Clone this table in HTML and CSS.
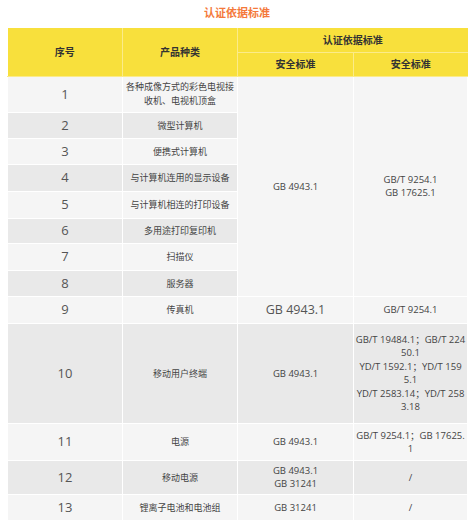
FILE: index.html
```html
<!DOCTYPE html>
<html lang="zh">
<head>
<meta charset="utf-8">
<link rel="stylesheet" href="styles.css">
</head>
<body>
<div class="page">
  <h1 class="title">认证依据标准</h1>
  <table class="std">
    <colgroup>
      <col class="c1"><col class="c2"><col class="c3"><col class="c4">
    </colgroup>
    <thead>
      <tr class="h1">
        <th rowspan="2">序号</th>
        <th rowspan="2">产品种类</th>
        <th colspan="2">认证依据标准</th>
      </tr>
      <tr class="h2">
        <th>安全标准</th>
        <th>安全标准</th>
      </tr>
    </thead>
    <tbody>
      <tr class="r1 lt"><td class="num">1</td><td class="name">各种成像方式的彩色电视接<br>收机、电视机顶盒</td><td class="std-t lt" rowspan="8">GB 4943.1</td><td class="std-t lt" rowspan="8">GB/T 9254.1<br>GB 17625.1</td></tr>
      <tr class="r2 dk"><td class="num">2</td><td class="name">微型计算机</td></tr>
      <tr class="r3 lt"><td class="num">3</td><td class="name">便携式计算机</td></tr>
      <tr class="r4 dk"><td class="num">4</td><td class="name">与计算机连用的显示设备</td></tr>
      <tr class="r5 lt"><td class="num">5</td><td class="name">与计算机相连的打印设备</td></tr>
      <tr class="r6 dk"><td class="num">6</td><td class="name">多用途打印复印机</td></tr>
      <tr class="r7 lt"><td class="num">7</td><td class="name">扫描仪</td></tr>
      <tr class="r8 dk"><td class="num">8</td><td class="name">服务器</td></tr>
      <tr class="r9 lt"><td class="num">9</td><td class="name">传真机</td><td class="big">GB 4943.1</td><td class="std-t">GB/T 9254.1</td></tr>
      <tr class="r10 dk"><td class="num">10</td><td class="name">移动用户终端</td><td class="std-t">GB 4943.1</td><td class="std-t multi">GB/T 19484.1；GB/T 224<br>50.1<br>YD/T 1592.1；YD/T 159<br>5.1<br>YD/T 2583.14；YD/T 258<br>3.18</td></tr>
      <tr class="r11 lt"><td class="num">11</td><td class="name">电源</td><td class="std-t">GB 4943.1</td><td class="std-t">GB/T 9254.1；GB 17625.<br>1</td></tr>
      <tr class="r12 dk"><td class="num">12</td><td class="name">移动电源</td><td class="std-t">GB 4943.1<br>GB 31241</td><td class="std-t">/</td></tr>
      <tr class="r13 lt"><td class="num">13</td><td class="name">锂离子电池和电池组</td><td class="std-t">GB 31241</td><td class="std-t">/</td></tr>
    </tbody>
  </table>
</div>
</body>
</html>
```
FILE: styles.css
```css
html, body {
  margin: 0;
  padding: 0;
  background: #ffffff;
}
.page {
  padding: 4px 7px 0 7px;
  font-family: "Open Sans", "Noto Sans CJK SC", sans-serif;
  color: #555;
}
.title {
  margin: 0;
  height: 24px;
  line-height: 17px;
  text-align: center;
  font-size: 11px;
  font-weight: bold;
  color: #f4793b;
  font-family: "Noto Sans CJK SC", sans-serif;
}
.std {
  width: 460px;
  border-collapse: collapse;
  table-layout: fixed;
}
.c1 { width: 115px; }
.c2 { width: 115px; }
.c3 { width: 116px; }
.c4 { width: 114px; }
.std th {
  background: #f8e03c;
  border: 1px solid #fbeb8a;
  border-top: none;
  color: #333;
  font-family: "Noto Sans CJK SC", sans-serif;
  font-size: 10px;
  font-weight: bold;
  padding: 0;
  line-height: 14px;
}
.std thead tr.h1 th:first-child { border-left: none; }
.std thead tr.h1 th:last-child,
.std thead tr.h2 th:last-child { border-right: none; }
.h1 { height: 24px; }
.h2 { height: 24px; }
.std td {
  border: 1px solid #ffffff;
  text-align: center;
  vertical-align: middle;
  padding: 0;
  line-height: 13px;
  white-space: nowrap;
  overflow: hidden;
}
.lt td { background: #f5f5f5; }
.dk td { background: #e9e9e9; }
.std td.lt { background: #f5f5f5; }
.num {
  font-size: 13px;
  color: #555;
}
.name {
  font-size: 9px;
  color: #444;
  font-family: "Noto Sans CJK SC", sans-serif;
}
.r1 .name { line-height: 14px; }
.std-t {
  font-size: 9.5px;
  color: #444;
}
.std td.multi { line-height: 13.5px; }
.big {
  font-size: 12.5px;
  color: #555;
}
.r1 { height: 36px; }
.r2 { height: 26px; }
.r3 { height: 26px; }
.r4 { height: 27px; }
.r5 { height: 27px; }
.r6 { height: 25px; }
.r7 { height: 27px; }
.r8 { height: 26px; }
.r9 { height: 27px; }
.r10 { height: 100px; }
.r11 { height: 37px; }
.r12 { height: 34px; }
.r13 { height: 26px; }
```
